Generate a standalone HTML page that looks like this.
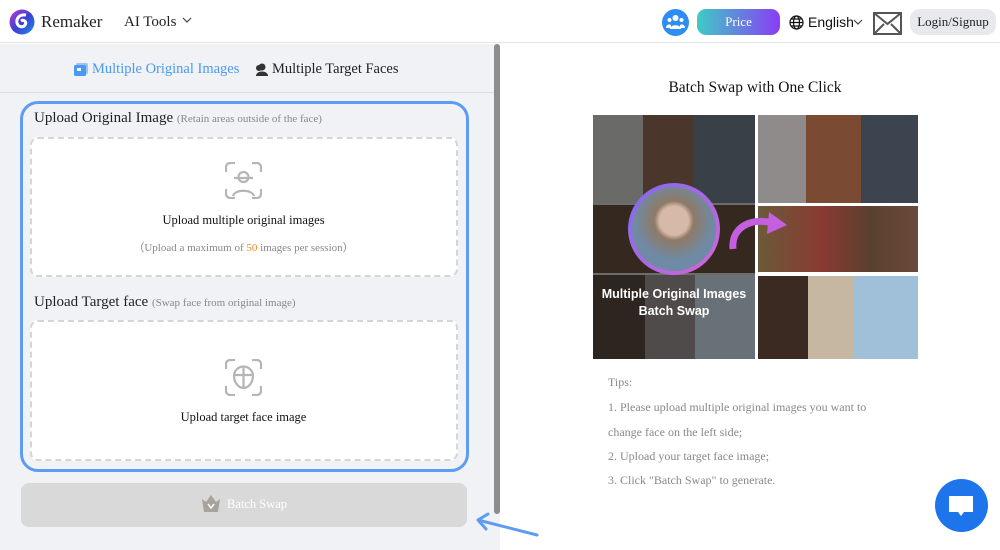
<!DOCTYPE html>
<html><head><meta charset="utf-8"><style>
*{margin:0;padding:0;box-sizing:border-box}
body{width:1000px;height:550px;overflow:hidden;background:#fff;font-family:"Liberation Serif",serif;position:relative}
.hdr{position:absolute;left:0;top:0;width:1000px;height:43px;background:#fff;border-bottom:1px solid #e4e4e4}
.left{position:absolute;left:0;top:44px;width:500px;height:506px;background:#f0f2f5}
.sb{position:absolute;left:494px;top:44px;width:6px;height:470px;background:#8c8c8c;border-radius:3px}
.abs{position:absolute}
.box{position:absolute;left:20px;top:101px;width:449px;height:371px;border:3px solid #5e9bf3;border-radius:18px}
.up{position:absolute;left:30px;width:428px;background:#fff;border:2px dashed #d5d5d5;border-radius:8px}
.t{position:absolute;white-space:nowrap}
</style></head><body>
<div class="hdr">
 <svg class="abs" style="left:9px;top:9px" width="26" height="26" viewBox="0 0 26 26"><defs><linearGradient id="lg" x1="0" y1="0" x2="1" y2="1"><stop offset="0" stop-color="#c03bd8"/><stop offset=".5" stop-color="#3b3fd0"/><stop offset="1" stop-color="#1e8fe8"/></linearGradient></defs><circle cx="13" cy="13" r="12.5" fill="url(#lg)"/><path d="M17 6 C11 5 7 9 8 14 C9 18 14 19 16 16 C18 13 15 10 12 12" fill="none" stroke="#fff" stroke-width="3"/></svg>
 <div class="t" style="left:41px;top:12px;font-size:17px;color:#222">Remaker</div>
 <div class="t" style="left:124px;top:14px;font-size:15px;color:#222">AI Tools</div>
 <svg class="abs" style="left:182px;top:17px" width="10" height="7"><path d="M1 1l4 4 4-4" fill="none" stroke="#444" stroke-width="1.2"/></svg>
 <div class="abs" style="left:662px;top:9px;width:27px;height:27px;border-radius:50%;background:#2e8df2"></div>
 <svg class="abs" style="left:666px;top:14px" width="19" height="16" viewBox="0 0 19 16"><circle cx="9.5" cy="4" r="3" fill="#fff"/><circle cx="3.5" cy="6" r="2" fill="#fff"/><circle cx="15.5" cy="6" r="2" fill="#fff"/><path d="M4 15c0-5 11-5 11 0z" fill="#fff"/><path d="M0 14c0-4 4-4 5-3v3z M19 14c0-4-4-4-5-3v3z" fill="#fff"/></svg>
 <div class="abs" style="left:697px;top:9px;width:83px;height:26px;border-radius:9px;background:linear-gradient(90deg,#3ecbc5,#8a3cf5);color:#fff;font-size:13px;text-align:center;line-height:26px">Price</div>
 <svg class="abs" style="left:789px;top:15px" width="15" height="15" viewBox="0 0 15 15" fill="none" stroke="#111" stroke-width="1.2"><circle cx="7.5" cy="7.5" r="6.5"/><ellipse cx="7.5" cy="7.5" rx="3" ry="6.5"/><path d="M1 7.5h13M2 4h11M2 11h11"/></svg>
 <div class="t" style="left:808px;top:14px;font-family:'Liberation Sans',sans-serif;font-size:14px;color:#111">English</div>
 <svg class="abs" style="left:853px;top:19px" width="10" height="7"><path d="M1 1l4 4 4-4" fill="none" stroke="#444" stroke-width="1.2"/></svg>
 <svg class="abs" style="left:873px;top:12px" width="29" height="23" viewBox="0 0 29 23" fill="none" stroke="#555" stroke-width="2"><rect x="1" y="1" width="27" height="21"/><path d="M1 1l13.5 11L28 1M1 22l10-10M28 22l-10-10"/></svg>
 <div class="abs" style="left:910px;top:9px;width:86px;height:26px;border-radius:10px;background:#e8e9ec;font-size:13px;color:#222;text-align:center;line-height:26px">Login/Signup</div>
</div>
<div class="left">
 <div class="abs" style="left:0;top:48px;width:494px;height:1px;background:#dcdcdc"></div>
</div>
<div class="sb"></div>
<svg class="abs" style="left:74px;top:63px" width="14" height="13" viewBox="0 0 14 13"><rect x="2" y="0" width="12" height="11" rx="1.5" fill="#9cc3f7"/><rect x="0" y="2" width="12" height="11" rx="1.5" fill="#4a9af2"/><rect x="3" y="5" width="4" height="3" fill="#fff"/></svg>
<div class="t" style="left:92px;top:61px;font-size:14.5px;color:#4a9af2">Multiple Original Images</div>
<svg class="abs" style="left:254px;top:63px" width="14" height="13" viewBox="0 0 14 13"><circle cx="8" cy="4" r="3.5" fill="#333"/><path d="M2 13c0-6 12-6 12 0z" fill="#333"/><circle cx="5" cy="5" r="3" fill="#333"/></svg>
<div class="t" style="left:272px;top:61px;font-size:14.5px;color:#222">Multiple Target Faces</div>

<div class="box"></div>
<div class="t" style="left:34px;top:110px;font-size:15px;color:#222">Upload Original Image <span style="font-size:11px;color:#888">(Retain areas outside of the face)</span></div>
<div class="up" style="top:137px;height:140px"></div>
<svg class="abs" style="left:225px;top:162px" width="37" height="37" viewBox="0 0 37 37" fill="none" stroke="#b5b5b5" stroke-width="2.2"><path d="M1 10V5a4 4 0 014-4h5M27 1h5a4 4 0 014 4v5M36 27v5a4 4 0 01-4 4h-5M10 36H5a4 4 0 01-4-4v-5"/><circle cx="18.5" cy="15" r="5"/><path d="M9 16h19M8 34c2-7 19-7 21 0"/></svg>
<div class="t" style="left:0;width:487px;text-align:center;top:213px;font-size:12.5px;color:#111">Upload multiple original images</div>
<div class="t" style="left:0;width:487px;text-align:center;top:239px;font-size:11px;color:#888">（Upload a maximum of <span style="color:#f0891c">50</span> images per session）</div>
<div class="t" style="left:34px;top:294px;font-size:15px;color:#222">Upload Target face <span style="font-size:11px;color:#888">(Swap face from original image)</span></div>
<div class="up" style="top:320px;height:141px"></div>
<svg class="abs" style="left:225px;top:359px" width="37" height="37" viewBox="0 0 37 37" fill="none" stroke="#b5b5b5" stroke-width="2.2"><path d="M1 10V5a4 4 0 014-4h5M27 1h5a4 4 0 014 4v5M36 27v5a4 4 0 01-4 4h-5M10 36H5a4 4 0 01-4-4v-5"/><path d="M9 17a9.5 9.5 0 0119 0c0 7-5 12-9.5 12S9 24 9 17zM18.5 8v21M9 16h19"/></svg>
<div class="t" style="left:0;width:487px;text-align:center;top:410px;font-size:12.5px;color:#111">Upload target face image</div>
<div class="abs" style="left:21px;top:483px;width:446px;height:44px;border-radius:8px;background:#d9d9d9"></div>
<svg class="abs" style="left:201px;top:495px" width="20" height="17" viewBox="0 0 20 17"><path d="M1 4l4 3 5-7 5 7 4-3-2 13H3z" fill="#a8a39a"/><path d="M7 9l3 4 3-4" fill="none" stroke="#fff" stroke-width="1.5"/></svg>
<div class="t" style="left:227px;top:497px;font-size:12.5px;color:#fff">Batch Swap</div>
<svg class="abs" style="left:470px;top:508px" width="72" height="32" viewBox="0 0 72 32"><path d="M67 27L8 12M8 12l10-6M8 12l8 9" fill="none" stroke="#5e9bf3" stroke-width="3" stroke-linecap="round"/></svg>

<div class="t" style="left:505px;width:500px;text-align:center;top:79px;font-size:15.5px;color:#111">Batch Swap with One Click</div>
<div class="abs" style="left:593px;top:115px;width:325px;height:244px;overflow:hidden;background:#fff">
 <div class="abs" style="left:0;top:0;width:162px;height:244px;background:#6c6c6c"></div>
 <div class="abs" style="left:0;top:0;width:50px;height:88px;background:#6a6a68"></div>
 <div class="abs" style="left:50px;top:0;width:50px;height:88px;background:#4a362a"></div>
 <div class="abs" style="left:100px;top:0;width:62px;height:88px;background:#3a4048"></div>
 <div class="abs" style="left:0;top:90px;width:162px;height:68px;background:#35291f"></div>
 <div class="abs" style="left:0;top:160px;width:52px;height:84px;background:#2c2520"></div>
 <div class="abs" style="left:52px;top:160px;width:50px;height:84px;background:#4e4b4a"></div>
 <div class="abs" style="left:102px;top:160px;width:60px;height:84px;background:#687178"></div>
 <div class="abs" style="left:165px;top:0;width:48px;height:88px;background:#8f8b8a"></div>
 <div class="abs" style="left:213px;top:0;width:55px;height:88px;background:#7a4a32"></div>
 <div class="abs" style="left:268px;top:0;width:57px;height:88px;background:#3c4450"></div>
 <div class="abs" style="left:165px;top:91px;width:160px;height:66px;background:linear-gradient(90deg,#6b5a3a,#8a3a32 40%,#5a4030 70%,#6a4a3a)"></div>
 <div class="abs" style="left:165px;top:161px;width:50px;height:83px;background:#3a2a22"></div>
 <div class="abs" style="left:215px;top:161px;width:45px;height:83px;background:#c6b8a0"></div>
 <div class="abs" style="left:260px;top:161px;width:65px;height:83px;background:#9fc0d8"></div>
 <div class="abs" style="left:35px;top:68px;width:92px;height:92px;border-radius:50%;background:linear-gradient(135deg,#7b6cf0,#d665d5);"></div>
 <div class="abs" style="left:39px;top:72px;width:84px;height:84px;border-radius:50%;background:radial-gradient(circle at 50% 40%,#d7b9a8 0 22%,#8e7a66 30%,#6f8aa5 60%)"></div>
 <svg class="abs" style="left:132px;top:88px" width="65" height="50" viewBox="0 0 65 50"><path d="M8 46C6 25 25 14 48 20" fill="none" stroke="#c65ee0" stroke-width="7"/><path d="M44 9l18 13-20 9z" fill="#c65ee0"/></svg>
 <div class="t" style="left:0;width:162px;text-align:center;top:171px;font-family:'Liberation Sans',sans-serif;font-size:12.5px;line-height:17px;color:#fff;font-weight:bold">Multiple Original Images<br>Batch Swap</div>
</div>
<div class="t" style="left:608px;top:375px;font-size:12px;color:#888">Tips:</div>
<div class="t" style="left:608px;top:400px;font-size:12px;color:#888">1. Please upload multiple original images you want to</div>
<div class="t" style="left:608px;top:425px;font-size:12px;color:#888">change face on the left side;</div>
<div class="t" style="left:608px;top:449px;font-size:12px;color:#888">2. Upload your target face image;</div>
<div class="t" style="left:608px;top:473px;font-size:12px;color:#888">3. Click "Batch Swap" to generate.</div>
<div class="abs" style="left:935px;top:479px;width:53px;height:53px;border-radius:50%;background:#1e74ea"></div>
<svg class="abs" style="left:947px;top:494px" width="28" height="26" viewBox="0 0 28 26"><path d="M2 2h24v16H17l-3 4-3-4H2z" fill="#fff"/></svg>
</body></html>
